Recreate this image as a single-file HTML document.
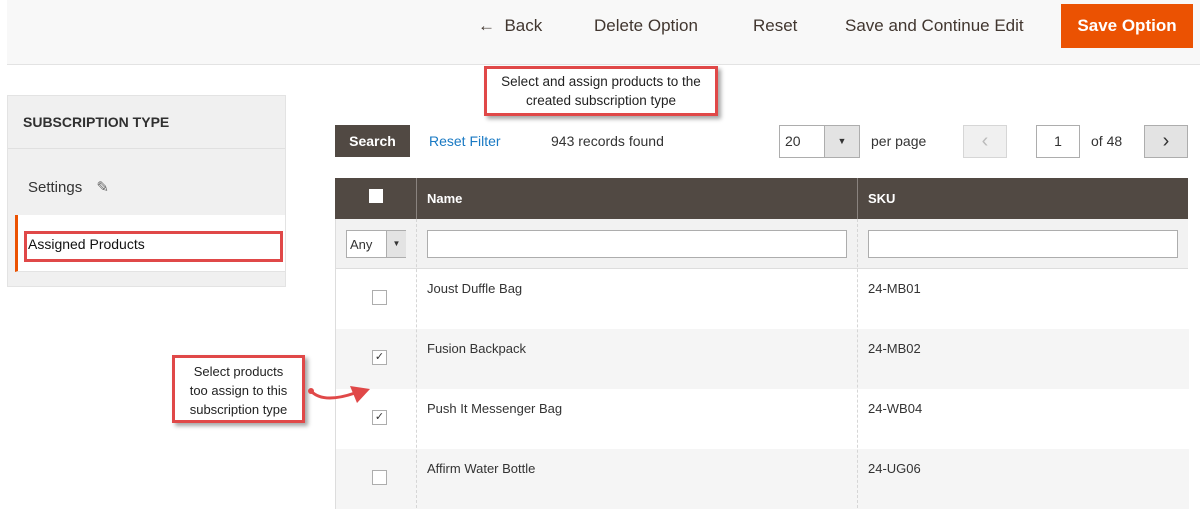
<!DOCTYPE html>
<html><head><style>
body{margin:0;width:1200px;height:508px;overflow:hidden;background:#fff;font-family:"Liberation Sans",sans-serif;color:#333;position:relative}
.a{position:absolute}
.top{left:7px;top:0;width:1193px;height:64px;background:#f8f8f8;border-bottom:1px solid #e3e3e3}
.tb{top:16px;font-size:17px;color:#41362f}
.call{background:#fff;border:3px solid #e04848;box-shadow:3px 3px 4px rgba(0,0,0,.35);text-align:center;font-size:13px;color:#222;line-height:19px;box-sizing:border-box}
.cb{width:13px;height:13px;border:1px solid #adadad;background:#fff}
.row{left:335px;width:853px;height:60px;border-left:1px solid #ddd}
</style></head><body>
<div class="a top"></div>
<div class="a tb" style="left:478px">&#8592;&nbsp; Back</div>
<div class="a tb" style="left:594px">Delete Option</div>
<div class="a tb" style="left:753px">Reset</div>
<div class="a tb" style="left:845px">Save and Continue Edit</div>
<div class="a" style="left:1061px;top:4px;width:132px;height:44px;background:#eb5202;color:#fff;font-size:17px;font-weight:bold;text-align:center;line-height:44px">Save Option</div>
<div class="a call" style="left:484px;top:66px;width:234px;height:50px;padding-top:3px;font-size:13.5px">Select and assign products to the<br>created subscription type</div>

<div class="a" style="left:7px;top:95px;width:277px;height:190px;background:#f0f0f0;border:1px solid #e3e3e3"></div>
<div class="a" style="left:8px;top:148px;width:277px;height:1px;background:#e0e0e0"></div>
<div class="a" style="left:23px;top:114px;font-size:14px;font-weight:bold;color:#303030">SUBSCRIPTION TYPE</div>
<div class="a" style="left:28px;top:178px;font-size:15px;color:#333">Settings <span style="margin-left:10px;color:#666">&#9998;</span></div>
<div class="a" style="left:15px;top:215px;width:270px;height:57px;background:#fff;border-left:3px solid #eb5202;box-sizing:border-box;border-bottom:1px solid #e3e3e3"></div>
<div class="a" style="left:24px;top:231px;width:259px;height:31px;border:3px solid #e04848;box-sizing:border-box"></div>
<div class="a" style="left:28px;top:236px;font-size:14px;color:#111">Assigned Products</div>

<div class="a" style="left:335px;top:125px;width:75px;height:32px;background:#514943;color:#fff;font-weight:bold;font-size:14px;text-align:center;line-height:32px">Search</div>
<div class="a" style="left:429px;top:133px;font-size:14px;color:#1979c3">Reset Filter</div>
<div class="a" style="left:551px;top:133px;font-size:14px;color:#333">943 records found</div>
<div class="a" style="left:779px;top:125px;width:79px;height:31px;border:1px solid #adadad;background:#fff"></div>
<div class="a" style="left:824px;top:126px;width:34px;height:31px;background:#e3e3e3;border-left:1px solid #adadad;text-align:center;line-height:31px;font-size:9px">&#9660;</div>
<div class="a" style="left:785px;top:133px;font-size:14px">20</div>
<div class="a" style="left:871px;top:133px;font-size:14px">per page</div>
<div class="a" style="left:963px;top:125px;width:42px;height:31px;border:1px solid #d6d6d6;background:#f0f0f0;color:#bbb;text-align:center;line-height:30px;font-size:20px">&#8249;</div>
<div class="a" style="left:1036px;top:125px;width:42px;height:31px;border:1px solid #adadad;text-align:center;line-height:31px;font-size:14px">1</div>
<div class="a" style="left:1091px;top:133px;font-size:14px">of 48</div>
<div class="a" style="left:1144px;top:125px;width:42px;height:31px;border:1px solid #adadad;background:#e3e3e3;color:#333;text-align:center;line-height:30px;font-size:20px">&#8250;</div>

<div class="a" style="left:335px;top:178px;width:853px;height:41px;background:#514943"></div>
<div class="a" style="left:416px;top:178px;width:1px;height:41px;background:#8a837f"></div>
<div class="a" style="left:857px;top:178px;width:1px;height:41px;background:#8a837f"></div>
<div class="a" style="left:369px;top:189px;width:14px;height:14px;background:#fff"></div>
<div class="a" style="left:427px;top:191px;font-size:13px;font-weight:bold;color:#fff">Name</div>
<div class="a" style="left:868px;top:191px;font-size:13px;font-weight:bold;color:#fff">SKU</div>
<div class="a" style="left:335px;top:219px;width:852px;height:49px;background:#f2f2f2;border-left:1px solid #ddd;border-bottom:1px solid #ddd"></div>
<div class="a" style="left:346px;top:230px;width:58px;height:26px;border:1px solid #adadad;background:#fff"></div>
<div class="a" style="left:386px;top:231px;width:19px;height:26px;background:#e3e3e3;border-left:1px solid #adadad;font-size:8px;text-align:center;line-height:26px">&#9660;</div>
<div class="a" style="left:350px;top:237px;font-size:13px">Any</div>
<div class="a" style="left:427px;top:230px;width:418px;height:26px;border:1px solid #adadad;background:#fff"></div>
<div class="a" style="left:868px;top:230px;width:308px;height:26px;border:1px solid #adadad;background:#fff"></div>

<div class="a row" style="top:269px;background:#fff"></div>
<div class="a row" style="top:329px;background:#f5f5f5"></div>
<div class="a row" style="top:389px;background:#fff"></div>
<div class="a row" style="top:449px;background:#f5f5f5"></div>
<div class="a" style="left:416px;top:219px;width:0;height:289px;border-left:1px dashed #d6d6d6"></div>
<div class="a" style="left:857px;top:219px;width:0;height:289px;border-left:1px dashed #d6d6d6"></div>
<div class="a cb" style="left:372px;top:290px"></div>
<div class="a cb" style="left:372px;top:350px;font-size:11px;line-height:13px;text-align:center">&#10003;</div>
<div class="a cb" style="left:372px;top:410px;font-size:11px;line-height:13px;text-align:center">&#10003;</div>
<div class="a cb" style="left:372px;top:470px"></div>
<div class="a" style="left:427px;top:281px;font-size:13px">Joust Duffle Bag</div>
<div class="a" style="left:868px;top:281px;font-size:13px">24-MB01</div>
<div class="a" style="left:427px;top:341px;font-size:13px">Fusion Backpack</div>
<div class="a" style="left:868px;top:341px;font-size:13px">24-MB02</div>
<div class="a" style="left:427px;top:401px;font-size:13px">Push It Messenger Bag</div>
<div class="a" style="left:868px;top:401px;font-size:13px">24-WB04</div>
<div class="a" style="left:427px;top:461px;font-size:13px">Affirm Water Bottle</div>
<div class="a" style="left:868px;top:461px;font-size:13px">24-UG06</div>

<div class="a call" style="left:172px;top:355px;width:133px;height:68px;padding-top:4px">Select products<br>too assign to this<br>subscription type</div>
<svg class="a" style="left:305px;top:380px" width="70" height="30"><circle cx="6" cy="11" r="3" fill="#e04848"/><path d="M6 11 Q18 24 50 13" stroke="#e04848" stroke-width="3" fill="none"/><path d="M45 6 L65 9 L52 23 Z" fill="#e04848"/></svg>
</body></html>
